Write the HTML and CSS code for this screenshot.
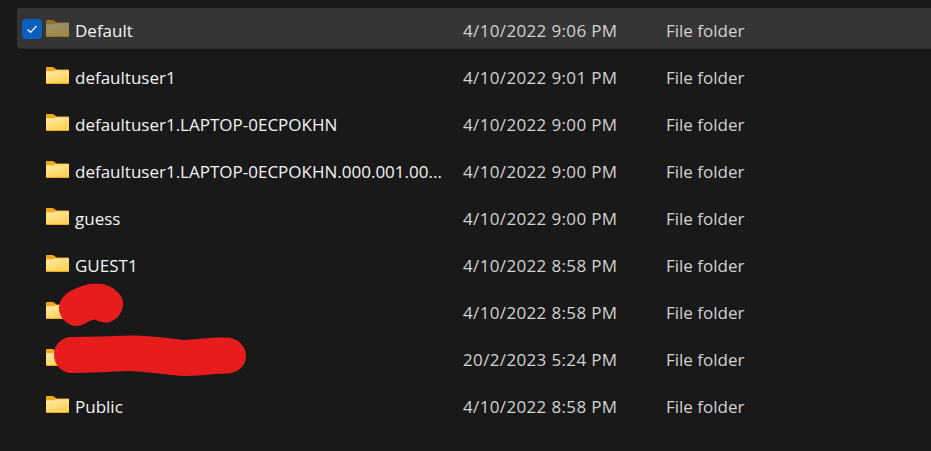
FILE: index.html
```html
<!DOCTYPE html>
<html lang="en">
<head>
<meta charset="UTF-8" />
<meta name="viewport" content="width=device-width, initial-scale=1" />
<title>Users</title>
<link rel="stylesheet" href="styles.css">
</head>
<body>

<svg width="0" height="0" class="defs">
  <defs>
    <linearGradient id="folderBody" x1="0" y1="0" x2="0.6" y2="1">
      <stop offset="0" stop-color="#ffeba8" />
      <stop offset="1" stop-color="#ffd258" />
    </linearGradient>
    <symbol id="folder" viewBox="0 0 23 17">
      <path d="M0 1C0 .4.4 0 1 0h5.500c.5 0 .9.2 1.300.5L10.500 2.500H22C22.600 2.500 23 2.900 23 3.500V16C23 16.600 22.600 17 22 17H1C.4 17 0 16.600 0 16Z" fill="#f0a91e" />
      <path d="M0 4.200H7.500L9.800 3.200H22.400C22.800 3.200 23 3.400 23 3.800V15.200C23 15.700 22.700 16 22.200 16H.8C.3 16 0 15.700 0 15.200Z" fill="url(#folderBody)" />
    </symbol>
  </defs>
</svg>

<div class="file-list">
  <div class="row selected">
    <span class="checkbox">
      <svg width="12" height="12" viewBox="0 0 12 12"><path d="M1.500 6.500 4.500 9.300 10.500 3" fill="none" stroke="#fff" stroke-width="1.200" /></svg>
    </span>
    <svg class="folder-icon" width="23" height="17"><use href="#folder" /></svg>
    <span class="name">Default</span>
    <span class="date">4/10/2022 9:06 PM</span>
    <span class="type">File folder</span>
  </div>
  <div class="row">
    <svg class="folder-icon" width="23" height="17"><use href="#folder" /></svg>
    <span class="name">defaultuser1</span>
    <span class="date">4/10/2022 9:01 PM</span>
    <span class="type">File folder</span>
  </div>
  <div class="row">
    <svg class="folder-icon" width="23" height="17"><use href="#folder" /></svg>
    <span class="name">defaultuser1.LAPTOP-0ECPOKHN</span>
    <span class="date">4/10/2022 9:00 PM</span>
    <span class="type">File folder</span>
  </div>
  <div class="row">
    <svg class="folder-icon" width="23" height="17"><use href="#folder" /></svg>
    <span class="name">defaultuser1.LAPTOP-0ECPOKHN.000.001.00...</span>
    <span class="date">4/10/2022 9:00 PM</span>
    <span class="type">File folder</span>
  </div>
  <div class="row">
    <svg class="folder-icon" width="23" height="17"><use href="#folder" /></svg>
    <span class="name">guess</span>
    <span class="date">4/10/2022 9:00 PM</span>
    <span class="type">File folder</span>
  </div>
  <div class="row">
    <svg class="folder-icon" width="23" height="17"><use href="#folder" /></svg>
    <span class="name">GUEST1</span>
    <span class="date">4/10/2022 8:58 PM</span>
    <span class="type">File folder</span>
  </div>
  <div class="row">
    <svg class="folder-icon" width="23" height="17"><use href="#folder" /></svg>
    <span class="name"></span>
    <span class="date">4/10/2022 8:58 PM</span>
    <span class="type">File folder</span>
  </div>
  <div class="row">
    <svg class="folder-icon" width="23" height="17"><use href="#folder" /></svg>
    <span class="name"></span>
    <span class="date">20/2/2023 5:24 PM</span>
    <span class="type">File folder</span>
  </div>
  <div class="row">
    <svg class="folder-icon" width="23" height="17"><use href="#folder" /></svg>
    <span class="name">Public</span>
    <span class="date">4/10/2022 8:58 PM</span>
    <span class="type">File folder</span>
  </div>
</div>

<!-- red scribbles painted over two names -->
<svg class="scribble" width="931" height="451" viewBox="0 0 931 451">
  <path d="M59 308C59 298 68 291 77 288C84 285 89 283.500 95 283.500C103 283.500 110 285 115 290C120 294 123 298 123 304C123 312 118 318 112 321C106 324 100 322 95 319.500C92 320 89 321 86 323C81 326 76 327 71 325C64 322 59 316 59 308Z" fill="#e71d1d" />
  <path d="M54 355C54 344 62 337 72 337C90 337 110 336 130 335.500C150 335.500 168 338 183 340C195 339.500 212 337 227 337.500C238 338 246 346 246 356C246 366 238 373 227 373.500C212 374 198 376 183 376C168 375 150 372 130 371C110 371.500 90 373 72 373C62 373 54 365 54 355Z" fill="#e71d1d" />
</svg>

</body>
</html>
```

FILE: styles.css
```css
body {
  margin: 0;
  background: #191919;
  color: #fff;
  font-family: "Open Sans", "Noto Sans", sans-serif;
  font-size: 17px;
  overflow: hidden;
}
.defs {
  display: block;
  height: 0;
}
.file-list {
  display: flex;
  flex-direction: column;
  gap: 7px;
  padding: 8px 0 0 17px;
}
.row {
  position: relative;
  display: grid;
  grid-template-columns: 23px 382px 197px 1fr;
  column-gap: 6px;
  align-items: center;
  box-sizing: border-box;
  height: 40px;
  padding: 4px 0 0 29px;
  border-radius: 3px 0 0 3px;
  white-space: nowrap;
}
.selected {
  background: #353535;
  box-shadow: 0 1px 0 #2b2b2b;
}
.checkbox {
  position: absolute;
  left: 5px;
  top: 11px;
  display: flex;
  align-items: center;
  justify-content: center;
  width: 20px;
  height: 20px;
  background: #0a5ebd;
  border-radius: 4px;
}
.folder-icon {
  display: block;
  margin-top: -3px;
}
.selected .folder-icon {
  opacity: 0.52;
}
.name {
  color: #f4f4f4;
}
.date {
  letter-spacing: 0.35px;
}
.date,
.type {
  color: #d2d2d2;
}
.scribble {
  position: absolute;
  left: 0;
  top: 0;
}
```
